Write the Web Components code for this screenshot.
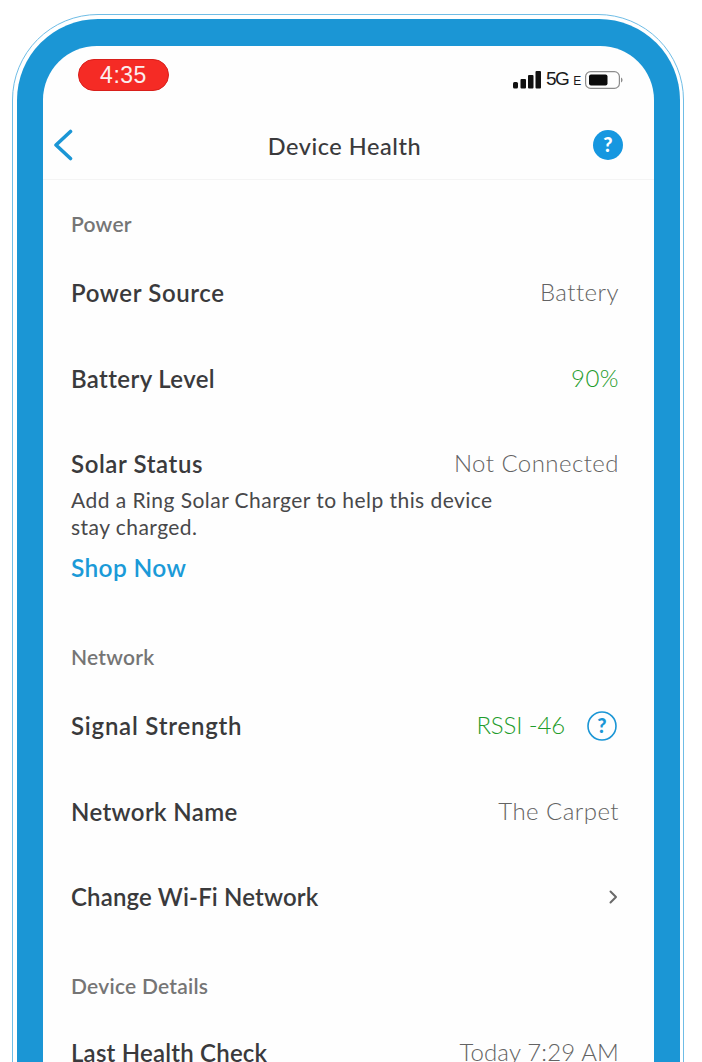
<!DOCTYPE html>
<html lang="en">
<head>
<meta charset="utf-8">
<title>Device Health</title>
<style>
	html, body { margin: 0; height: 1062px; overflow: hidden; background: #fff; }
	body { font-family: "Lato", "Liberation Sans", sans-serif; }
</style>
</head>
<body>
<phone-frame>
	<status-bar time="4:35"></status-bar>
	<nav-header title="Device Health"></nav-header>
	<section-label style="margin-top: 30px">Power</section-label>
	<health-row label="Power Source" value="Battery" style="margin-top: 40px; --label-ls: .62px"></health-row>
	<health-row label="Battery Level" value="90%" tone="good" style="--label-ls: .37px"></health-row>
	<health-row label="Solar Status" value="Not Connected" style="--label-ls: .6px">
		<p>Add a Ring Solar Charger to help this device stay charged.</p>
		<a href="#">Shop Now</a>
	</health-row>
	<section-label style="margin-top: 67px">Network</section-label>
	<health-row label="Signal Strength" value="RSSI -46" tone="good" style="margin-top: 40px; --label-ls: .78px; --value-ls: -.15px"><help-icon slot="after"></help-icon></health-row>
	<health-row label="Network Name" value="The Carpet" style="--label-ls: .37px"></health-row>
	<health-row label="Change Wi-Fi Network" style="--label-ls: .15px"><chevron-icon slot="after"></chevron-icon></health-row>
	<section-label style="margin-top: 60px">Device Details</section-label>
	<health-row label="Last Health Check" value="Today 7:29 AM" style="margin-top: 38px; --label-ls: .21px; --value-ls: .15px"></health-row>
</phone-frame>

<script>
class PhoneFrame extends HTMLElement {
	constructor() {
		super();
		this.attachShadow({ mode: 'open' });
		this.shadowRoot.innerHTML = `
		<style>
			:host {
				display: block;
				width: 672px;
				height: 1200px;
				margin: 14px 0 0 12px;
				box-sizing: border-box;
				border: 1px solid #6fbde6;
				border-radius: 86px 86px 0 0;
				padding: 4px 3px 0 4px;
			}
			.case {
				height: 100%;
				box-sizing: border-box;
				background: #1b96d5;
				border-radius: 81px 81px 0 0;
				padding: 27px 26px 0;
			}
			.screen {
				height: 100%;
				background: #fefefe;
				border-radius: 54px 54px 0 0;
				overflow: hidden;
			}
		</style>
		<div class="case"><div class="screen"><slot></slot></div></div>`;
	}
}

class StatusBar extends HTMLElement {
	constructor() {
		super();
		this.attachShadow({ mode: 'open' });
		this.shadowRoot.innerHTML = `
		<style>
			:host {
				display: flex;
				align-items: flex-start;
				justify-content: space-between;
				height: 64px;
				padding: 13px 31px 0 35px;
				box-sizing: border-box;
			}
			.time {
				width: 91px;
				height: 32px;
				box-sizing: border-box;
				border-radius: 16px;
				background: #f52b25;
				border: 1px solid #d81f1b;
				color: #fbeeee;
				font: 500 23px/30px "Liberation Sans", sans-serif;
				text-align: center;
				letter-spacing: .5px;
			}
			.right {
				display: flex;
				align-items: center;
				margin-top: 11px;
				height: 20px;
				color: #1a1a1a;
			}
			.net {
				display: flex;
				align-items: baseline;
				width: 32px;
				margin: 0 7px 0 5px;
				font: 400 19px/20px "Liberation Sans", sans-serif;
				letter-spacing: -1.5px;
			}
			.net small { font-size: 12px; margin-left: 5px; letter-spacing: 0; }
		</style>
		<div class="time"></div>
		<div class="right">
			<svg width="28" height="18" viewBox="0 0 28 18" fill="#111">
				<rect x="0" y="11" width="5" height="6.5" rx="1.5"/>
				<rect x="7.5" y="8" width="5.5" height="9.5" rx="1"/>
				<rect x="15" y="4" width="5.5" height="13.5" rx="1"/>
				<rect x="22.5" y="0" width="5.5" height="17.5" rx="1"/>
			</svg>
			<span class="net">5G<small>E</small></span>
			<svg width="38" height="18" viewBox="0 0 38 18">
				<rect x=".6" y=".6" width="33.8" height="16.8" rx="5" fill="none" stroke="#8c8c8c" stroke-width="1.2"/>
				<rect x="4" y="3.5" width="18.5" height="11" rx="2" fill="#0b0b0b"/>
				<path d="M36 6.5c1 .5 1.5 1.5 1.5 2.5s-.5 2-1.5 2.5z" fill="#8c8c8c"/>
			</svg>
		</div>`;
		this.shadowRoot.querySelector('.time').textContent = this.getAttribute('time');
	}
}

class NavHeader extends HTMLElement {
	constructor() {
		super();
		this.attachShadow({ mode: 'open' });
		this.shadowRoot.innerHTML = `
		<style>
			:host {
				display: flex;
				align-items: center;
				justify-content: space-between;
				height: 70px;
				padding: 0 31px 0 10px;
				box-sizing: border-box;
				border-bottom: 1px solid #f4f4f4;
			}
			h1 {
				margin: 2px 0 0 23px;
				font: 500 23.5px/30px "Lato", sans-serif;
				color: #3a3a3c;
				letter-spacing: .55px;
			}
			svg { display: block; }
		</style>
		<svg width="20" height="32" viewBox="0 0 20 32" fill="none">
			<path d="M17.5 2.5 3 16l14.5 13.5" stroke="#1b96d5" stroke-width="3.6" stroke-linecap="round" stroke-linejoin="round"/>
		</svg>
		<h1></h1>
		<svg width="30" height="30" viewBox="0 0 30 30">
			<circle cx="15" cy="15" r="15" fill="#1697e0"/>
			<text x="15" y="22" text-anchor="middle" font-family="Lato, sans-serif" font-weight="900" font-size="20" fill="#fff">?</text>
		</svg>`;
		this.shadowRoot.querySelector('h1').textContent = this.getAttribute('title');
	}
}

class SectionLabel extends HTMLElement {
	constructor() {
		super();
		this.attachShadow({ mode: 'open' });
		this.shadowRoot.innerHTML = `
		<style>
			:host {
				display: block;
				padding: 0 35px 0 28px;
				font: 600 21px/28px "Lato", sans-serif;
				color: #757575;
				letter-spacing: .25px;
			}
		</style>
		<slot></slot>`;
	}
}

class HealthRow extends HTMLElement {
	constructor() {
		super();
		this.attachShadow({ mode: 'open' });
		this.shadowRoot.innerHTML = `
		<style>
			:host {
				display: block;
				padding: 0 35px 0 28px;
				margin-bottom: 55.5px;
			}
			.top {
				display: flex;
				align-items: center;
				justify-content: space-between;
				height: 30px;
			}
			.label {
				font: 600 24px/30px "Lato", sans-serif;
				color: #3a3a3c;
				letter-spacing: var(--label-ls, .45px);
			}
			.end { display: flex; align-items: center; gap: 22px; }
			.value {
				font: 300 24px/28px "Lato", sans-serif;
				color: #636363;
				letter-spacing: var(--value-ls, .45px);
				padding-bottom: 2px;
			}
			:host([tone="good"]) .value { color: #1f9c2c; }
			::slotted(p) {
				margin: 7px 0 0;
				max-width: 440px;
				font: 400 21px/27px "Lato", sans-serif;
				color: #48484a;
				letter-spacing: .45px;
			}
			::slotted(a) {
				display: block;
				margin-top: 13px;
				margin-bottom: -7px;
				font: 600 24.5px/30px "Lato", sans-serif;
				color: #1b9ad8;
				text-decoration: none;
				letter-spacing: .35px;
			}
		</style>
		<div class="top">
			<span class="label"></span>
			<span class="end"><span class="value"></span><slot name="after"></slot></span>
		</div>
		<div class="more"><slot></slot></div>`;
		this.shadowRoot.querySelector('.label').textContent = this.getAttribute('label');
		this.shadowRoot.querySelector('.value').textContent = this.getAttribute('value') || '';
	}
}

class HelpIcon extends HTMLElement {
	constructor() {
		super();
		this.attachShadow({ mode: 'open' });
		this.shadowRoot.innerHTML = `
		<style>:host { display: block; width: 30px; height: 30px; margin-right: 2px; } svg { display: block; }</style>
		<svg width="30" height="30" viewBox="0 0 30 30">
			<circle cx="15" cy="15" r="14" fill="none" stroke="#1b96d5" stroke-width="1.6"/>
			<text x="15" y="22" text-anchor="middle" font-family="Lato, sans-serif" font-weight="900" font-size="20" fill="#1b96d5">?</text>
		</svg>`;
	}
}

class ChevronIcon extends HTMLElement {
	constructor() {
		super();
		this.attachShadow({ mode: 'open' });
		this.shadowRoot.innerHTML = `
		<style>:host { display: block; width: 10px; height: 14px; margin-right: 1px; } svg { display: block; }</style>
		<svg width="10" height="14" viewBox="0 0 10 14" fill="none">
			<path d="M2.5 1.5 8 7 2.5 12.5" stroke="#6a6a6a" stroke-width="2" stroke-linecap="round" stroke-linejoin="round"/>
		</svg>`;
	}
}

customElements.define('phone-frame', PhoneFrame);
customElements.define('status-bar', StatusBar);
customElements.define('nav-header', NavHeader);
customElements.define('section-label', SectionLabel);
customElements.define('health-row', HealthRow);
customElements.define('help-icon', HelpIcon);
customElements.define('chevron-icon', ChevronIcon);
</script>
</body>
</html>
